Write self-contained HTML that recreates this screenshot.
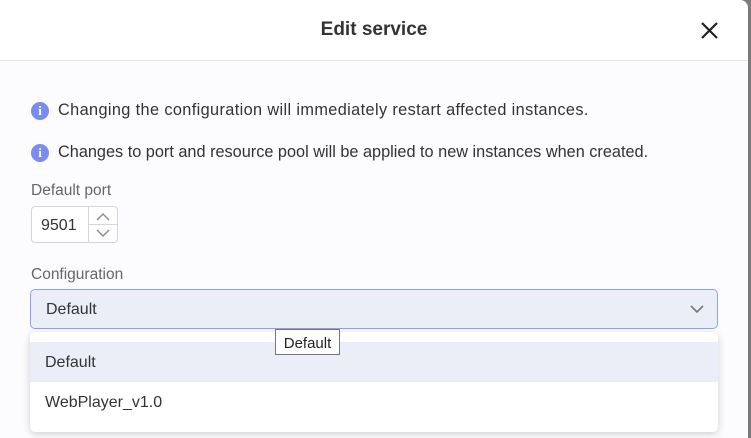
<!DOCTYPE html>
<html><head><style>
*{margin:0;padding:0;box-sizing:border-box}
body{width:751px;height:438px;overflow:hidden;background:#7a7a7a;font-family:"Liberation Sans",sans-serif;position:relative}
.dlg{position:absolute;left:0;top:0;width:748px;height:438px;background:#fcfcfe;border-top-right-radius:8px;overflow:hidden}
.hdr{height:61px;background:#fff;border-bottom:1px solid #e6e6ef;position:relative}
.hdr h1{font-size:19px;font-weight:bold;color:#333;text-align:center;line-height:60px;}
.x{position:absolute;left:700px;top:21px}
.info{position:absolute;left:31px;font-size:16.3px;color:#333;display:flex;align-items:center}
.ic{width:18px;height:18px;border-radius:50%;background:#7a8cf0;color:#fff;font-weight:bold;font-size:13px;text-align:center;line-height:18px;margin-right:9px;font-family:"Liberation Serif",serif;letter-spacing:0}
.lbl{position:absolute;left:31px;font-size:15.5px;color:#666}
.num{position:absolute;left:31px;top:206px;width:87px;height:37px;border:1px solid #d4d4dc;border-radius:4px;background:#fff}
.num span{position:absolute;left:9px;top:10px;font-size:16px;color:#333}
.num .sp{position:absolute;left:56px;top:0;width:30px;height:35px;border-left:1px solid #d4d4dc}
.num .mid{position:absolute;left:56px;top:17px;width:30px;border-top:1px solid #d4d4dc}
.sel{position:absolute;left:30px;top:289px;width:688px;height:40px;border:1px solid #8aa2f5;border-radius:5px;background:#eceef7}
.sel span{position:absolute;left:15px;top:11px;font-size:16px;color:#333}
.dd{position:absolute;left:30px;top:332px;width:688px;height:100px;background:#fff;border-radius:5px;box-shadow:0 2px 8px rgba(0,0,0,.18)}
.opt{position:absolute;left:0;width:688px;height:40px;font-size:16px;color:#333;padding-left:15px;line-height:42px}
.tip{position:absolute;left:275px;top:329px;width:65px;height:26px;border:1px solid #777;background:#fff;font-size:15px;color:#222;text-align:center;line-height:27px}
</style></head><body>
<div class="dlg">
<div class="hdr"><h1>Edit service</h1>
<svg class="x" width="19" height="19" viewBox="0 0 19 19"><path d="M2 2L17 17M17 2L2 17" stroke="#222" stroke-width="2.2"/></svg></div>
<div class="info" style="top:101px;letter-spacing:0.38px"><div class="ic">i</div>Changing the configuration will immediately restart affected instances.</div>
<div class="info" style="top:143px"><div class="ic">i</div>Changes to port and resource pool will be applied to new instances when created.</div>
<div class="lbl" style="top:182px">Default port</div>
<div class="num"><span>9501</span><div class="sp"></div><div class="mid"></div>
<svg style="position:absolute;left:64px;top:5px" width="14" height="9"><path d="M1 8L7 2L13 8" stroke="#888" stroke-width="1.4" fill="none"/></svg>
<svg style="position:absolute;left:64px;top:22px" width="14" height="9"><path d="M1 1L7 7L13 1" stroke="#888" stroke-width="1.4" fill="none"/></svg></div>
<div class="lbl" style="top:266px">Configuration</div>
<div class="sel"><span>Default</span>
<svg style="position:absolute;left:659px;top:15px" width="14" height="9"><path d="M1 1L7 7L13 1" stroke="#777" stroke-width="1.6" fill="none"/></svg></div>
<div class="dd"><div class="opt" style="top:10px;background:#eceef7">Default</div><div class="opt" style="top:50px">WebPlayer_v1.0</div></div>
<div class="tip">Default</div>
</div>
</body></html>
